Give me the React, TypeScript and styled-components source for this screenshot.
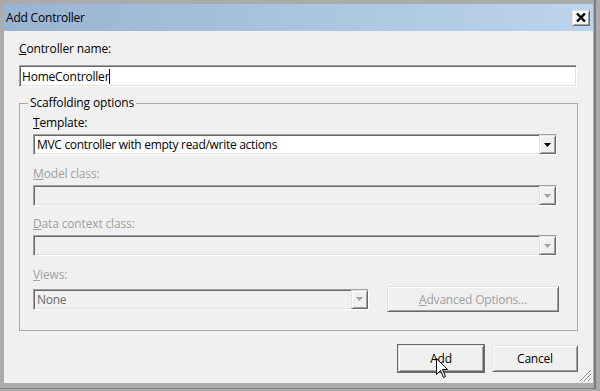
import styled, { createGlobalStyle, css } from 'styled-components';

const GlobalStyle = createGlobalStyle`
  html, body {
    margin: 0;
    padding: 0;
    background: #ababab;
  }
  body {
    font-family: "Open Sans", "Noto Sans", sans-serif;
    font-size: 12px;
    color: #000;
  }
`;

const sunken = css`
  border: 1px solid;
  border-color: #a0a0a0 #ffffff #ffffff #a0a0a0;
  box-shadow: inset 1px 1px 0 #696969, inset -1px -1px 0 #e3e3e3;
`;

const raised = css`
  border: 1px solid;
  border-color: #e3e3e3 #696969 #696969 #e3e3e3;
  box-shadow: inset 1px 1px 0 #ffffff, inset -1px -1px 0 #a0a0a0;
`;

const Frame = styled.div`
  width: 600px;
  height: 391px;
  box-sizing: border-box;
  padding: 4px 7px 8px 4px;
  background: #ababab;
  display: flex;
  flex-direction: column;
  box-shadow: inset -4px -2px 0 #ababab, inset -6px -3px 0 #7d7d7d;
`;

const TitleBar = styled.div`
  height: 27px;
  flex: none;
  display: flex;
  align-items: center;
  padding-left: 2px;
  background: linear-gradient(to right, #99b4d1, #bcd4ec);
`;

const TitleText = styled.span`
  flex: 1;
  font-size: 12px;
  letter-spacing: -0.2px;
`;

const CloseButton = styled.div`
  width: 18px;
  height: 16px;
  box-sizing: border-box;
  margin-right: 3px;
  display: flex;
  align-items: center;
  justify-content: center;
  background: #f4f4f4;
  ${raised}
`;

const Body = styled.div`
  position: relative;
  flex: 1;
  background: #f0f0f0;
  padding: 10px 15px 11px;
  display: flex;
  flex-direction: column;
`;

const Label = styled.div<{ $disabled?: boolean; $mt?: number }>`
  height: 16px;
  line-height: 16px;
  font-size: 12px;
  letter-spacing: -0.15px;
  margin-top: ${(p) => p.$mt ?? 0}px;
  color: ${(p) => (p.$disabled ? '#a0a0a0' : '#000')};
`;

const AccessKey = styled.span`
  text-decoration: underline;
`;

const TextBox = styled.div`
  height: 22px;
  box-sizing: border-box;
  margin: 8px 1px 0 0;
  padding-left: 2px;
  display: flex;
  align-items: center;
  background: #fff;
  font-size: 12px;
  letter-spacing: -0.2px;
  ${sunken}
`;

const Caret = styled.span`
  display: inline-block;
  width: 1px;
  height: 15px;
  background: #000;
  vertical-align: middle;
`;

const Group = styled.fieldset`
  margin: 9px 0 0;
  padding: 5px 20px 18px 13px;
  border: 1px solid #a9a9a9;
  min-inline-size: 0;
`;

const Legend = styled.legend`
  padding: 0 2px;
  margin-left: -5px;
  height: 14px;
  line-height: 14px;
  font-size: 12px;
  letter-spacing: -0.15px;
`;

const Combo = styled.div<{ $disabled?: boolean }>`
  height: 21px;
  box-sizing: border-box;
  margin-top: 3px;
  display: flex;
  align-items: stretch;
  background: ${(p) => (p.$disabled ? '#f0f0f0' : '#fff')};
  ${sunken}
`;

const ComboText = styled.span<{ $muted?: boolean }>`
  flex: 1;
  padding-left: 3px;
  line-height: 19px;
  font-size: 12px;
  letter-spacing: -0.3px;
  color: ${(p) => (p.$muted ? '#6d6d6d' : '#000')};
`;

const DropButton = styled.div`
  width: 17px;
  box-sizing: border-box;
  display: flex;
  align-items: center;
  justify-content: center;
  background: #f0f0f0;
  ${raised}
`;

const ViewsRow = styled.div`
  display: grid;
  grid-template-columns: 336px 1fr;
  column-gap: 18px;
  align-items: center;
  margin-top: 3px;
  margin-right: -2px;
  height: 26px;

  & > ${Combo} {
    margin-top: 0;
  }
`;

const PushButton = styled.div<{ $disabled?: boolean; $default?: boolean }>`
  position: relative;
  height: 26px;
  box-sizing: border-box;
  display: flex;
  align-items: center;
  justify-content: center;
  background: #f0f0f0;
  font-size: 12px;
  letter-spacing: -0.2px;
  color: ${(p) => (p.$disabled ? '#a0a0a0' : '#000')};
  ${raised}
  ${(p) =>
    p.$default &&
    css`
      outline: 1px solid #696969;
    `}
`;

const Footer = styled.div`
  margin-top: 14px;
  display: flex;
  justify-content: flex-end;
  gap: 8px;

  & > ${PushButton} {
    width: 86px;
    height: 27px;
  }
`;

const Pointer = styled.svg`
  position: absolute;
  left: 37px;
  top: 12px;
`;

const Grip = styled.svg`
  position: absolute;
  right: 1px;
  bottom: 1px;
`;

function Arrow({ disabled }: { disabled?: boolean }) {
  return (
    <svg width="7" height="4" viewBox="0 0 7 4">
      <path d="M0 0H7L3.5 4Z" fill={disabled ? '#a0a0a0' : '#000'} />
    </svg>
  );
}

function ComboBox({ value, disabled, muted }: { value?: string; disabled?: boolean; muted?: boolean }) {
  return (
    <Combo $disabled={disabled}>
      <ComboText $muted={muted}>{value}</ComboText>
      <DropButton>
        <Arrow disabled={disabled} />
      </DropButton>
    </Combo>
  );
}

export default function App() {
  return (
    <>
      <GlobalStyle />
      <Frame>
        <TitleBar>
          <TitleText>Add Controller</TitleText>
          <CloseButton>
            <svg width="10" height="9" viewBox="0 0 10 9">
              <path d="M1 0.5L9 8.5M9 0.5L1 8.5" stroke="#000" strokeWidth="2.4" />
            </svg>
          </CloseButton>
        </TitleBar>
        <Body>
          <Label>
            <AccessKey>C</AccessKey>ontroller name:
          </Label>
          <TextBox>
            HomeController
            <Caret />
          </TextBox>

          <Group>
            <Legend>Scaffolding options</Legend>
            <Label>
              <AccessKey>T</AccessKey>emplate:
            </Label>
            <ComboBox value="MVC controller with empty read/write actions" />

            <Label $disabled $mt={11}>
              <AccessKey>M</AccessKey>odel class:
            </Label>
            <ComboBox disabled />

            <Label $disabled $mt={10}>
              <AccessKey>D</AccessKey>ata context class:
            </Label>
            <ComboBox disabled />

            <Label $disabled $mt={11}>
              <AccessKey>V</AccessKey>iews:
            </Label>
            <ViewsRow>
              <ComboBox value="None" disabled muted />
              <PushButton $disabled>
                <span>
                  <AccessKey>A</AccessKey>dvanced Options...
                </span>
              </PushButton>
            </ViewsRow>
          </Group>

          <Footer>
            <PushButton $default>
              Add
              <Pointer width="13" height="21" viewBox="0 0 13 21">
                <path
                  d="M0.5 0.5V16.5L4.5 12.5L7.5 19.5L9.5 18.5L6.5 11.5H11.5Z"
                  fill="#fff"
                  stroke="#000"
                  strokeWidth="1"
                  strokeLinejoin="miter"
                />
              </Pointer>
            </PushButton>
            <PushButton>Cancel</PushButton>
          </Footer>

          <Grip width="13" height="13" viewBox="0 0 13 13">
            <path d="M12 1L1 12M12 5L5 12M12 9L9 12" stroke="#8a8a8a" strokeWidth="1" />
            <path d="M12 2L2 12M12 6L6 12M12 10L10 12" stroke="#fff" strokeWidth="1" />
          </Grip>
        </Body>
      </Frame>
    </>
  );
}
